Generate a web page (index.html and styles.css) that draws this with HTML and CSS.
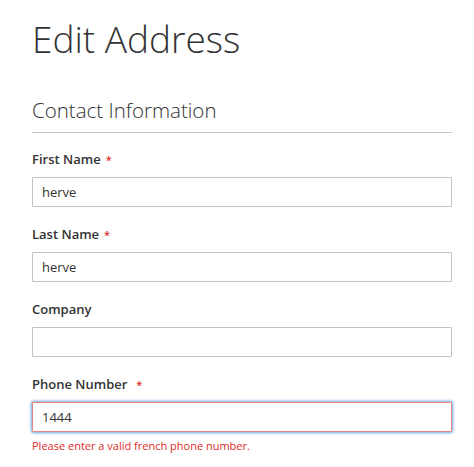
FILE: index.html
```html
<!DOCTYPE html>
<html>
<head>
<meta charset="utf-8">
<link rel="stylesheet" href="styles.css">
</head>
<body>
<main class="page">
  <h1 class="page-title">Edit Address</h1>
  <form class="form">
    <h2 class="legend">Contact Information</h2>
    <div class="field">
      <label class="label required">First Name</label>
      <input class="input" type="text" value="herve">
    </div>
    <div class="field">
      <label class="label required">Last Name</label>
      <input class="input" type="text" value="herve">
    </div>
    <div class="field">
      <label class="label">Company</label>
      <input class="input" type="text" value="">
    </div>
    <div class="field">
      <label class="label required wide">Phone Number</label>
      <input class="input error" type="text" value="1444">
      <div class="error-msg">Please enter a valid french phone number.</div>
    </div>
  </form>
</main>
</body>
</html>
```

FILE: styles.css
```css
html, body {
  margin: 0;
  padding: 0;
  background: #ffffff;
}
body {
  font-family: "Open Sans", "Liberation Sans", sans-serif;
  color: #333333;
}
.page {
  padding: 0 22px 0 32px;
}
.page-title {
  margin: 0;
  padding-top: 16px;
  font-size: 37px;
  font-weight: 300;
  line-height: 46px;
  color: #333333;
}
.form {
  margin: 0;
  padding: 0;
}
.legend {
  margin: 35px 0 0 0;
  padding: 0 0 9px 0;
  font-size: 20.5px;
  font-weight: 300;
  line-height: 26px;
  border-bottom: 1px solid #c6c6c6;
  color: #333333;
}
.field {
  margin-top: 17.5px;
}
.field + .field {
  margin-top: 18.5px;
}
.label {
  display: block;
  font-size: 13px;
  font-weight: 600;
  line-height: 17px;
  margin-bottom: 9.5px;
  color: #333333;
}
.label.required::after {
  content: "*";
  color: #e02b27;
  font-size: 11px;
  margin-left: 5px;
}
.label.wide::after {
  margin-left: 9px;
}
.input {
  display: block;
  box-sizing: border-box;
  width: 100%;
  height: 30px;
  margin: 0;
  padding: 0 9px;
  font-family: "Open Sans", "Liberation Sans", sans-serif;
  font-size: 13px;
  color: #333333;
  background: #ffffff;
  border: 1px solid #c2c2c2;
  border-radius: 1px;
  outline: none;
}
.input.error {
  border-color: #ed8380;
  box-shadow: 0 0 3px 1px #68a8e0;
}
.error-msg {
  margin-top: 7px;
  font-size: 11px;
  line-height: 14px;
  color: #e02b27;
}
```
